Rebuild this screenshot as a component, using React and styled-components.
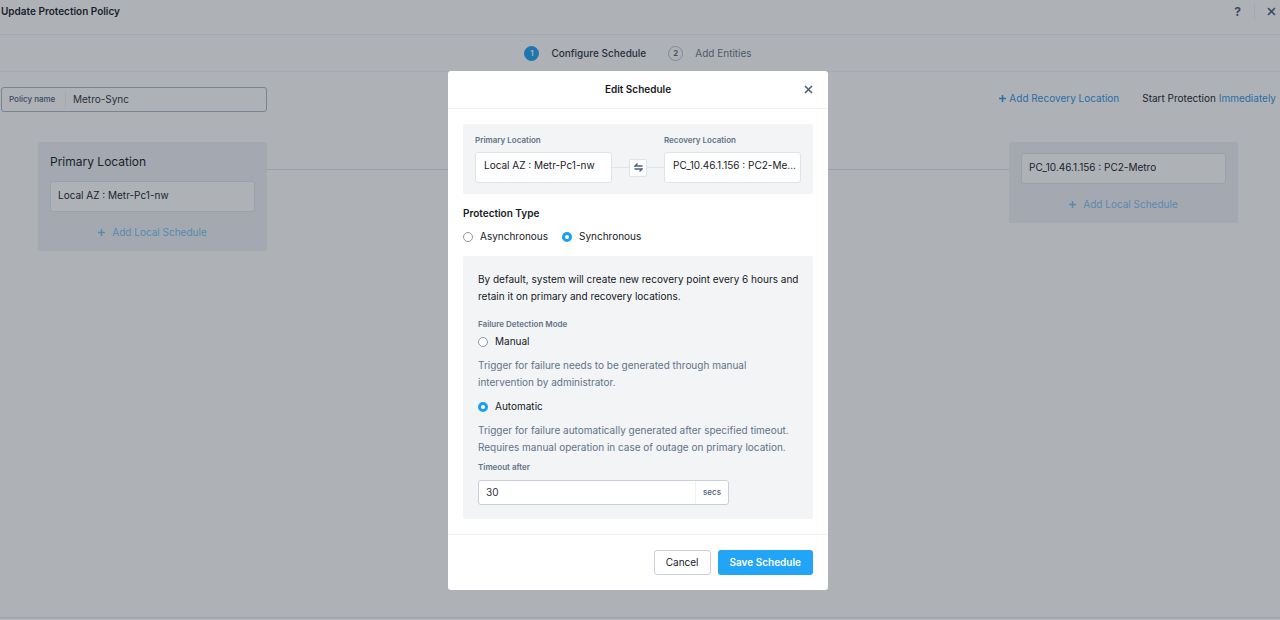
import React, { useState } from "react";
import styled, { createGlobalStyle } from "styled-components";

function CloseIcon() {
  return (
    <svg width="9" height="9" viewBox="0 0 9 9" fill="none" stroke="#4c6079" strokeWidth="1.6">
      <path d="M1 1l7 7M8 1L1 8" />
    </svg>
  );
}

function PlusIcon() {
  return (
    <svg width="7" height="7" viewBox="0 0 7 7" fill="none" stroke="currentColor" strokeWidth="1.5">
      <path d="M3.5 0v7M0 3.5h7" />
    </svg>
  );
}

function SwapIcon() {
  return (
    <svg width="9" height="9" viewBox="0 0 9 9" fill="none" stroke="#4c6079" strokeWidth="1.3">
      <path d="M3.5 0.5L1 3h7.5M5.5 8.5L8 6H0.5" />
    </svg>
  );
}

function App() {
  const [type, setType] = useState("sync");
  const [mode, setMode] = useState("auto");

  return (
    <>
      <GlobalStyle />
      <Page>
        <TopBar>
          <PageTitle>Update Protection Policy</PageTitle>
          <TopActions>
            <HelpBtn aria-label="Help">?</HelpBtn>
            <IconBtn aria-label="Close page">
              <CloseIcon />
            </IconBtn>
          </TopActions>
        </TopBar>
        <Steps>
          <Step $active>
            <span>1</span>
            Configure Schedule
          </Step>
          <Step>
            <span>2</span>
            Add Entities
          </Step>
        </Steps>
        <Content>
          <Toolbar>
            <PolicyField>
              <label htmlFor="policy">Policy name</label>
              <input id="policy" defaultValue="Metro-Sync" />
            </PolicyField>
            <ToolbarLinks>
              <AddLocation href="#add-location">
                <PlusIcon />
                Add Recovery Location
              </AddLocation>
              <p>
                Start Protection <a href="#start">Immediately</a>
              </p>
            </ToolbarLinks>
          </Toolbar>
          <Locations>
            <LocationCard>
              <h2>Primary Location</h2>
              <LocationName>Local AZ : Metr-Pc1-nw</LocationName>
              <AddSchedule>
                <PlusIcon />
                Add Local Schedule
              </AddSchedule>
            </LocationCard>
            <Connector />
            <LocationCard>
              <LocationName>PC_10.46.1.156 : PC2-Metro</LocationName>
              <AddSchedule>
                <PlusIcon />
                Add Local Schedule
              </AddSchedule>
            </LocationCard>
          </Locations>
        </Content>
        <BottomBar />
      </Page>

      <Overlay>
        <Modal role="dialog" aria-modal="true" aria-labelledby="modal-title">
          <ModalHeader>
            <h1 id="modal-title">Edit Schedule</h1>
            <IconBtn aria-label="Close">
              <CloseIcon />
            </IconBtn>
          </ModalHeader>
          <ModalBody>
            <Pair>
              <PairField>
                <SmallLabel htmlFor="primary">Primary Location</SmallLabel>
                <input id="primary" readOnly value="Local AZ : Metr-Pc1-nw" />
              </PairField>
              <SwapWrap>
                <SwapBtn aria-label="Swap locations">
                  <SwapIcon />
                </SwapBtn>
              </SwapWrap>
              <PairField>
                <SmallLabel htmlFor="recovery">Recovery Location</SmallLabel>
                <input id="recovery" readOnly value="PC_10.46.1.156 : PC2-Metro" />
              </PairField>
            </Pair>

            <SectionTitle>Protection Type</SectionTitle>
            <RadioRow>
              <Radio>
                <input
                  type="radio"
                  name="type"
                  checked={type === "async"}
                  onChange={() => setType("async")}
                />
                Asynchronous
              </Radio>
              <Radio>
                <input
                  type="radio"
                  name="type"
                  checked={type === "sync"}
                  onChange={() => setType("sync")}
                />
                Synchronous
              </Radio>
            </RadioRow>

            <Settings>
              <Intro>
                By default, system will create new recovery point every 6 hours and retain it on
                primary and recovery locations.
              </Intro>
              <SmallLabel as="h3">Failure Detection Mode</SmallLabel>
              <Radio>
                <input
                  type="radio"
                  name="mode"
                  checked={mode === "manual"}
                  onChange={() => setMode("manual")}
                />
                Manual
              </Radio>
              <Hint>
                Trigger for failure needs to be generated through manual intervention by
                administrator.
              </Hint>
              <Radio>
                <input
                  type="radio"
                  name="mode"
                  checked={mode === "auto"}
                  onChange={() => setMode("auto")}
                />
                Automatic
              </Radio>
              <Hint>
                Trigger for failure automatically generated after specified timeout. Requires manual
                operation in case of outage on primary location.
              </Hint>
              <SmallLabel htmlFor="timeout">Timeout after</SmallLabel>
              <TimeoutField>
                <input id="timeout" defaultValue="30" />
                <span>secs</span>
              </TimeoutField>
            </Settings>
          </ModalBody>
          <ModalFooter>
            <CancelBtn>Cancel</CancelBtn>
            <SaveBtn>Save Schedule</SaveBtn>
          </ModalFooter>
        </Modal>
      </Overlay>
    </>
  );
}

export default App;

const GlobalStyle = createGlobalStyle`
  * {
    box-sizing: border-box;
  }
  body {
    margin: 0;
    color: #16191f;
    background: #fff;
  }
  body,
  input,
  button {
    font-family: Inter, "Liberation Sans", sans-serif;
    font-size: 10px;
    line-height: 17px;
  }
  h1, h2, h3, p {
    margin: 0;
  }
  a {
    color: #2f94e6;
    text-decoration: none;
  }
  button {
    padding: 0;
    border: none;
    background: none;
    cursor: pointer;
  }
`;
const Page = styled.div`
  display: flex;
  flex-direction: column;
  min-height: 100vh;
  padding-bottom: 2px;
`;
const TopBar = styled.header`
  display: flex;
  justify-content: space-between;
  align-items: flex-start;
  height: 35px;
  padding: 3px 4px 0 1px;
  border-bottom: 1px solid #f0f2f5;
`;
const PageTitle = styled.h1`
  font-size: 10px;
  font-weight: 600;
`;
const TopActions = styled.div`
  display: flex;
  align-items: center;
`;
const IconBtn = styled.button`
  display: flex;
  align-items: center;
  height: 17px;
`;
const HelpBtn = styled.button`
  height: 17px;
  margin-right: 12px;
  padding-right: 13px;
  border-right: 1px solid #f0f2f5;
  color: #4c6079;
  font-size: 12px;
  font-weight: bold;
`;
const Steps = styled.nav`
  display: flex;
  justify-content: center;
  align-items: center;
  gap: 22px;
  height: 37px;
  padding-right: 4px;
  border-bottom: 1px solid #f0f2f5;
`;
const Step = styled.div`
  display: flex;
  align-items: center;
  gap: 12px;
  color: ${(props) => (props.$active ? "#30353d" : "#6b7684")};
  font-weight: ${(props) => (props.$active ? 500 : 400)};

  span {
    display: flex;
    align-items: center;
    justify-content: center;
    width: 15px;
    height: 15px;
    border: 1px solid ${(props) => (props.$active ? "#1fa0f5" : "#b8bfca")};
    border-radius: 50%;
    background: ${(props) => (props.$active ? "#1fa0f5" : "transparent")};
    color: ${(props) => (props.$active ? "#fff" : "#4c5563")};
    font-size: 8px;
    font-weight: 600;
  }
`;
const Content = styled.main`
  flex: 1;
  padding: 15px 4px 0 1px;
`;
const Toolbar = styled.div`
  display: flex;
  justify-content: space-between;
  align-items: center;
`;
const PolicyField = styled.div`
  display: flex;
  align-items: center;
  width: 266px;
  height: 25px;
  border: 1px solid #a9b7c6;
  border-radius: 3px;

  label {
    width: 64px;
    padding-left: 7px;
    border-right: 1px solid #f0f2f5;
    color: #4c6079;
    font-size: 8px;
    font-weight: 500;
  }
  input {
    flex: 1;
    min-width: 0;
    padding: 0 7px;
    border: none;
    background: none;
    color: #30353d;
  }
`;
const ToolbarLinks = styled.div`
  display: flex;
  align-items: center;
  gap: 23px;
  padding-bottom: 2px;
`;
const AddLocation = styled.a`
  display: flex;
  align-items: center;
  gap: 3px;
`;
const Locations = styled.section`
  display: flex;
  align-items: flex-start;
  margin-top: 30px;
  padding: 0 38px 0 37px;
`;
const LocationCard = styled.div`
  width: 229px;
  padding: 11px 12px 10px;
  border-radius: 2px;
  background: #eff1f6;

  h2 {
    margin-bottom: 11px;
    font-size: 12px;
    font-weight: normal;
  }
`;
const LocationName = styled.div`
  padding: 5px 7px 7px;
  border: 1px solid #dfe3ea;
  border-radius: 3px;
  background: #fff;
`;
const Connector = styled.div`
  flex: 1;
  height: 1px;
  margin-top: 27px;
  background: #dfe3ea;
`;
const AddSchedule = styled.button`
  display: flex;
  justify-content: center;
  align-items: center;
  gap: 7px;
  width: 100%;
  margin-top: 12px;
  color: #7abff0;
`;
const BottomBar = styled.footer`
  height: 1px;
  background: #dfe3ea;
`;

const Overlay = styled.div`
  position: fixed;
  inset: 0;
  display: flex;
  justify-content: center;
  align-items: flex-start;
  padding: 71px 4px 0 0;
  overflow: auto;
  background: rgba(30, 41, 56, 0.36);
`;
const Modal = styled.div`
  width: 380px;
  border-radius: 3px;
  background: #fff;
`;
const ModalHeader = styled.header`
  display: grid;
  grid-template-columns: 1fr auto 1fr;
  align-items: center;
  height: 38px;
  padding: 0 15px;
  border-bottom: 1px solid #f0f2f5;

  h1 {
    grid-column: 2;
    font-size: 10px;
    font-weight: 600;
  }
  button {
    justify-self: end;
  }
`;
const ModalBody = styled.div`
  padding: 15px;
`;
const Pair = styled.div`
  display: flex;
  align-items: flex-end;
  height: 70px;
  padding: 11px 12px;
  border-radius: 2px;
  background: #f2f4f6;
`;
const SmallLabel = styled.label`
  display: block;
  color: #627386;
  font-size: 8px;
  font-weight: 600;
`;
const PairField = styled.div`
  width: 137px;

  label {
    margin-bottom: 3px;
  }
  input {
    display: block;
    width: 100%;
    height: 31px;
    padding: 0 3px 5px 8px;
    border: 1px solid #dfe3ea;
    border-radius: 3px;
    background: #fff;
    color: #16191f;
    text-overflow: ellipsis;
  }
`;
const SwapWrap = styled.div`
  display: flex;
  flex: 1;
  align-items: center;
  height: 31px;

  &::before,
  &::after {
    content: "";
    flex: 1;
    height: 1px;
    background: #dfe3ea;
  }
`;
const SwapBtn = styled.button`
  display: flex;
  align-items: center;
  justify-content: center;
  width: 18px;
  height: 18px;
  border: 1px solid #dfe3ea;
  border-radius: 2px;
  background: #fff;
`;
const SectionTitle = styled.h2`
  margin-top: 11px;
  font-size: 10px;
  font-weight: 600;
`;
const RadioRow = styled.div`
  display: flex;
  gap: 14px;
  margin-top: 6px;
`;
const Radio = styled.label`
  display: flex;
  align-items: center;
  gap: 7px;

  input {
    appearance: none;
    width: 10px;
    height: 10px;
    margin: 0;
    border: 1px solid #8d99a8;
    border-radius: 50%;
    background: #fff;
  }
  input:checked {
    border: 3px solid #1b9df8;
  }
`;
const Settings = styled.section`
  margin-top: 11px;
  padding: 15px 8px 14px 15px;
  border-radius: 2px;
  background: #f2f4f6;
`;
const Intro = styled.p`
  margin-bottom: 11px;
`;
const Hint = styled.p`
  margin: 7px 0;
  color: #627386;

  & + ${SmallLabel} {
    margin-top: -4px;
  }
`;
const TimeoutField = styled.div`
  display: flex;
  align-items: center;
  width: 251px;
  height: 25px;
  margin-top: 4px;
  border: 1px solid #c9cfda;
  border-radius: 3px;
  background: #fff;

  input {
    flex: 1;
    min-width: 0;
    padding: 0 7px;
    border: none;
    background: none;
    color: #30353d;
  }
  span {
    padding: 3px 7px;
    border-left: 1px solid #f0f2f5;
    color: #4c6079;
    font-size: 8px;
    font-weight: 500;
  }
`;
const ModalFooter = styled.footer`
  display: flex;
  justify-content: flex-end;
  gap: 7px;
  padding: 15px;
  border-top: 1px solid #f0f2f5;
`;
const CancelBtn = styled.button`
  height: 25px;
  padding: 0 11px;
  border: 1px solid #c9cfda;
  border-radius: 3px;
  color: #16191f;
`;
const SaveBtn = styled.button`
  height: 25px;
  padding: 0 12px;
  border-radius: 3px;
  background: #22a5f7;
  color: #fff;
  font-weight: 600;
`;
